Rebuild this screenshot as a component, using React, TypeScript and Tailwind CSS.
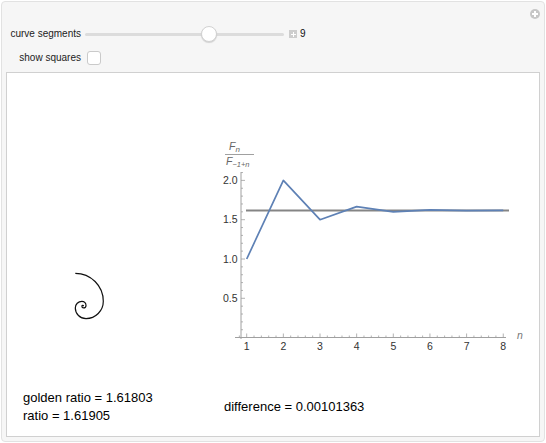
import React from "react";

const xs = (n: number) => 246.7 + (n - 1) * 36.65;
const ys = (v: number) => 259 - (v - 1) * 78.6;

function Chart() {
  const data = [1, 2, 1.5, 5 / 3, 1.6, 1.625, 21 / 13, 34 / 21];
  const pts = data.map((v, i) => `${xs(i + 1).toFixed(2)},${ys(v).toFixed(2)}`).join(" ");
  const xTicks: { x: number; major: boolean }[] = [];
  for (let k = 4; k <= 40; k++) {
    const n = k / 5;
    xTicks.push({ x: xs(n), major: k % 5 === 0 });
  }
  const yTicks: { y: number; major: boolean }[] = [];
  for (let k = 1; k <= 21; k++) {
    yTicks.push({ y: ys(k / 10), major: k % 5 === 0 });
  }
  return (
    <svg width={320} height={215} viewBox="0 0 320 215">
      <g transform="translate(-215,-140)" fontFamily="'Liberation Sans', Arial, sans-serif">
        <line x1={241} y1={172} x2={241} y2={339} stroke="#a0a0a0" strokeWidth={1} />
        <line x1={235} y1={337.5} x2={506} y2={337.5} stroke="#a0a0a0" strokeWidth={1} />
        {xTicks.map((t, i) => (
          <line key={"xt" + i} x1={t.x} x2={t.x} y1={337.5} y2={t.major ? 333.5 : 335.5} stroke="#a0a0a0" strokeWidth={0.8} />
        ))}
        {yTicks.map((t, i) => (
          <line key={"yt" + i} x1={241} x2={t.major ? 245 : 243} y1={t.y} y2={t.y} stroke="#a0a0a0" strokeWidth={0.8} />
        ))}
        {[0.5, 1, 1.5, 2].map((v) => (
          <text key={"yl" + v} x={237.5} y={ys(v) + 3.6} fontSize={10.5} fill="#333" textAnchor="end">
            {v.toFixed(1)}
          </text>
        ))}
        {[1, 2, 3, 4, 5, 6, 7, 8].map((n) => (
          <text key={"xl" + n} x={xs(n)} y={350} fontSize={10.5} fill="#333" textAnchor="middle">
            {n}
          </text>
        ))}
        <text x={520} y={339} fontSize={10.5} fill="#777" fontStyle="italic" textAnchor="middle">
          n
        </text>
        <text x={229} y={150} fontSize={10.5} fill="#666" fontStyle="italic">
          F
          <tspan fontSize={8} dy={2}>n</tspan>
        </text>
        <line x1={225} y1={154.5} x2={254} y2={154.5} stroke="#888" strokeWidth={0.8} />
        <text x={226} y={165} fontSize={10.5} fill="#666" fontStyle="italic">
          F
          <tspan fontSize={7.5} dy={2}>−1+n</tspan>
        </text>
        <line x1={246} y1={ys(1.618034)} x2={509} y2={ys(1.618034)} stroke="#858585" strokeWidth={2} />
        <polyline points={pts} fill="none" stroke="#5e81b5" strokeWidth={1.7} strokeLinejoin="round" />
      </g>
    </svg>
  );
}

function Spiral() {
  const d =
    "M75.3,273.3 A28,28 0 0 1 103.3,301.3 A17.29,17.29 0 0 1 86.01,318.59 A10.71,10.71 0 0 1 75.3,307.88 A6.59,6.59 0 0 1 81.89,301.29 A4.12,4.12 0 0 1 86.01,305.41 A2.47,2.47 0 0 1 83.54,307.88 A1.65,1.65 0 0 1 81.89,306.23 A0.82,0.82 0 0 1 82.71,305.41 A0.82,0.82 0 0 1 83.53,306.23";
  return (
    <svg width={40} height={56} viewBox="0 0 40 56">
      <g transform="translate(-70,-268)">
        <path d={d} fill="none" stroke="#111" strokeWidth={1.2} />
      </g>
    </svg>
  );
}

export default function App() {
  return (
    <div className="w-[546px] h-[443px] p-px bg-white" style={{ fontFamily: "'Liberation Sans', Arial, sans-serif" }}>
      <div className="h-full rounded-[4px] border border-[#e2e2e2] bg-[#f6f6f6] flex flex-col px-[4px] pb-[4px]">
        <div className="flex justify-end pt-[7px]">
          <div className="w-[10px] h-[10px] rounded-full bg-[#c6c6c6] relative">
            <div className="absolute left-[2px] top-[4.25px] w-[6px] h-[1.5px] bg-white" />
            <div className="absolute top-[2px] left-[4.25px] h-[6px] w-[1.5px] bg-white" />
          </div>
        </div>
        <div className="flex items-center h-[16px] mt-[7px] pl-[4px]">
          <div className="w-[71px] text-right text-[10px] text-[#222] leading-none whitespace-nowrap">curve segments</div>
          <div className="ml-[4px] w-[199px] h-[16px] relative flex items-center">
            <div className="w-full h-[3px] rounded-full bg-[#dcdcdc]" />
            <div className="absolute left-[116px] top-0 w-[16px] h-[16px] rounded-full bg-white border border-[#d2d2d2] shadow-[0_1px_1px_rgba(0,0,0,0.15)]" />
          </div>
          <div className="ml-[5px] w-[8px] h-[8px] bg-[#cdcdcd] relative">
            <div className="absolute left-[1.5px] top-[3.5px] w-[5px] h-[1px] bg-white" />
            <div className="absolute top-[1.5px] left-[3.5px] h-[5px] w-[1px] bg-white" />
          </div>
          <div className="ml-[3px] text-[10px] text-[#111] leading-none">9</div>
        </div>
        <div className="flex items-center h-[14px] mt-[9px] pl-[4px]">
          <div className="w-[71px] text-right text-[10px] text-[#222] leading-none whitespace-nowrap">show squares</div>
          <div className="ml-[6px] w-[14px] h-[14px] rounded-[3px] border border-[#cacaca] bg-white" />
        </div>
        <div className="mt-[7px] flex-1 bg-white border border-[#d0d0d0] flex flex-col">
          <div className="flex h-[316px]">
            <div className="w-[208px]">
              <div className="ml-[63px] mt-[195px]">
                <Spiral />
              </div>
            </div>
            <div className="flex-1">
              <div className="mt-[67px]">
                <Chart />
              </div>
            </div>
          </div>
          <div className="flex">
            <div className="w-[208px] pl-[16px] text-[13px] leading-[18px] text-black">
              <div>golden ratio = 1.61803</div>
              <div>ratio = 1.61905</div>
            </div>
            <div className="flex items-center pl-[9px] text-[13px] leading-[18px] text-black">difference = 0.00101363</div>
          </div>
        </div>
      </div>
    </div>
  );
}
